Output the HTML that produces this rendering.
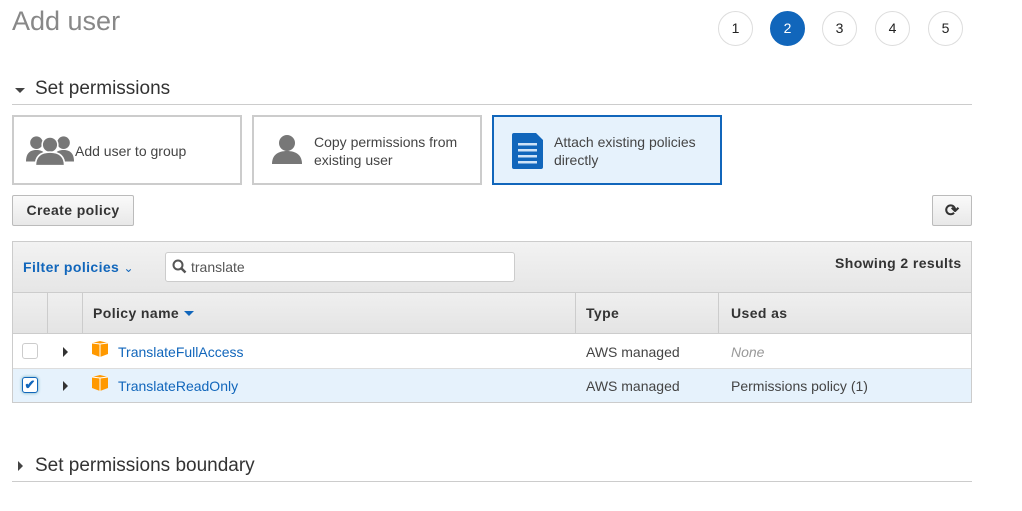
<!DOCTYPE html>
<html><head><style>
*{box-sizing:border-box;margin:0;padding:0}
body{width:1022px;height:511px;background:#fff;font-family:"Liberation Sans",Arial,sans-serif;color:#444;position:relative;overflow:hidden}
.a{position:absolute}
.circ{position:absolute;top:11px;width:35px;height:35px;border-radius:50%;border:1px solid #ddd;text-align:center;line-height:33px;font-size:14px;color:#222}
.card{position:absolute;top:115px;height:70px;border:2px solid #ccc;background:#fff;font-size:14px;color:#444}
.btn{position:absolute;border:1px solid #bbb;border-radius:2px;background:linear-gradient(#fafafa,#e8e8e8)}
.lnk{color:#1166bb}
b,.bd{letter-spacing:0.4px}
</style></head><body>
<div class="a" style="left:12px;top:6px;font-size:27px;color:#888">Add user</div>
<div class="circ" style="left:718px">1</div>
<div class="circ" style="left:770px;background:#1166bb;border-color:#1166bb;color:#fff">2</div>
<div class="circ" style="left:822px">3</div>
<div class="circ" style="left:875px">4</div>
<div class="circ" style="left:928px">5</div>

<div class="a" style="left:15px;top:88px;width:0;height:0;border-left:5px solid transparent;border-right:5px solid transparent;border-top:5px solid #444"></div>
<div class="a" style="left:35px;top:78px;font-size:19px;color:#333">Set permissions</div>
<div class="a" style="left:12px;top:104px;width:960px;height:1px;background:#ccc"></div>

<div class="card" style="left:12px;width:230px">
<svg class="a" style="left:12px;top:17px" width="48" height="32" viewBox="0 0 46 30"><g fill="#777"><circle cx="10" cy="8" r="6"/><path d="M0 26c0-8 4-11 10-11s10 3 10 11z"/><circle cx="36" cy="8" r="6"/><path d="M26 26c0-8 4-11 10-11s10 3 10 11z"/><circle cx="23" cy="10" r="7.5" stroke="#fff" stroke-width="1.5"/><path d="M9 30c0-10 6-13 14-13s14 3 14 13z" stroke="#fff" stroke-width="1.5"/></g></svg>
<div class="a" style="left:61px;top:26px">Add user to group</div></div>
<div class="card" style="left:252px;width:230px">
<svg class="a" style="left:17px;top:17px" width="32" height="30" viewBox="0 0 32 30"><g fill="#777"><circle cx="16" cy="9" r="8"/><path d="M1 30c0-9 6-13 15-13s15 4 15 13z"/></g></svg>
<div class="a" style="left:60px;top:16px;line-height:18px">Copy permissions from<br>existing user</div></div>
<div class="card" style="left:492px;width:230px;border-color:#1166bb;background:#e6f2fc">
<svg class="a" style="left:18px;top:16px" width="32" height="36" viewBox="0 0 32 36"><path d="M2 0h22l7 7v27a2 2 0 0 1-2 2H2a2 2 0 0 1-2-2V2a2 2 0 0 1 2-2z" fill="#1166bb"/><g fill="#cfe3f7"><rect x="6" y="10" width="19" height="2.5"/><rect x="6" y="16" width="19" height="2.5"/><rect x="6" y="22" width="19" height="2.5"/><rect x="6" y="28" width="19" height="2.5"/></g></svg>
<div class="a" style="left:60px;top:16px;line-height:18px">Attach existing policies<br>directly</div></div>

<div class="btn bd" style="left:12px;top:195px;width:122px;height:31px;font-size:14px;font-weight:bold;color:#333;text-align:center;line-height:29px">Create policy</div>
<div class="btn" style="left:932px;top:195px;width:40px;height:31px;text-align:center;line-height:29px;font-size:17px;font-weight:bold;color:#333">⟳</div>

<div class="a" style="left:12px;top:241px;width:960px;height:162px;border:1px solid #ccc"></div>
<div class="a" style="left:13px;top:242px;width:958px;height:50px;background:linear-gradient(#f2f2f2,#e6e6e6)"></div>
<div class="a lnk bd" style="left:23px;top:259px;font-size:14px;font-weight:bold">Filter policies <span style="font-weight:normal;font-size:12px">⌄</span></div>
<div class="a" style="left:165px;top:252px;width:350px;height:30px;background:#fff;border:1px solid #ccc;border-radius:3px"></div>
<svg class="a" style="left:172px;top:259px" width="15" height="15" viewBox="0 0 15 15"><circle cx="6" cy="6" r="4.5" fill="none" stroke="#555" stroke-width="2"/><path d="M9.5 9.5l4 4" stroke="#555" stroke-width="2.5"/></svg>
<div class="a" style="left:191px;top:259px;font-size:14px;color:#555">translate</div>
<div class="a bd" style="left:835px;top:255px;font-size:14px;font-weight:bold;color:#333">Showing 2 results</div>

<div class="a" style="left:13px;top:292px;width:958px;height:42px;background:linear-gradient(#efefef,#e4e4e4);border-top:1px solid #ccc;border-bottom:1px solid #ccc"></div>
<div class="a" style="left:47px;top:292px;width:1px;height:42px;background:#ccc"></div>
<div class="a" style="left:82px;top:292px;width:1px;height:42px;background:#ccc"></div>
<div class="a" style="left:575px;top:292px;width:1px;height:42px;background:#ccc"></div>
<div class="a" style="left:718px;top:292px;width:1px;height:42px;background:#ccc"></div>
<div class="a bd" style="left:93px;top:305px;font-size:14px;font-weight:bold;color:#333">Policy name</div>
<div class="a" style="left:184px;top:311px;width:0;height:0;border-left:5px solid transparent;border-right:5px solid transparent;border-top:5px solid #1166bb"></div>
<div class="a bd" style="left:586px;top:305px;font-size:14px;font-weight:bold;color:#333">Type</div>
<div class="a bd" style="left:731px;top:305px;font-size:14px;font-weight:bold;color:#333">Used as</div>

<div class="a" style="left:13px;top:368px;width:958px;height:1px;background:#ddd"></div>
<div class="a" style="left:13px;top:369px;width:958px;height:33px;background:#e6f2fc"></div>
<div class="a" style="left:22px;top:343px;width:16px;height:16px;border:1px solid #ccc;border-radius:3px;background:#fff"></div>
<div class="a" style="left:22px;top:377px;width:16px;height:16px;border:1px solid #1166bb;border-radius:3px;background:#fff;box-shadow:0 0 3px #6ab;color:#1166bb;font-size:13px;line-height:14px;text-align:center;font-weight:bold">✔</div>
<div class="a" style="left:63px;top:347px;border-top:5px solid transparent;border-bottom:5px solid transparent;border-left:5px solid #333"></div>
<div class="a" style="left:63px;top:381px;border-top:5px solid transparent;border-bottom:5px solid transparent;border-left:5px solid #333"></div>
<svg class="a" style="left:92px;top:341px" width="16" height="16" viewBox="0 0 16 16"><path d="M0 2l8-2 8 2v11l-8 3-8-3z" fill="#f90"/><path d="M8 3v13" stroke="#fff" stroke-width="1"/><path d="M0 2l8 1 8-1" stroke="#fff" stroke-width="1" fill="none"/></svg>
<svg class="a" style="left:92px;top:375px" width="16" height="16" viewBox="0 0 16 16"><path d="M0 2l8-2 8 2v11l-8 3-8-3z" fill="#f90"/><path d="M8 3v13" stroke="#fff" stroke-width="1"/><path d="M0 2l8 1 8-1" stroke="#fff" stroke-width="1" fill="none"/></svg>
<div class="a lnk" style="left:118px;top:344px;font-size:14px">TranslateFullAccess</div>
<div class="a lnk" style="left:118px;top:378px;font-size:14px">TranslateReadOnly</div>
<div class="a" style="left:586px;top:344px;font-size:14px;color:#444">AWS managed</div>
<div class="a" style="left:586px;top:378px;font-size:14px;color:#444">AWS managed</div>
<div class="a" style="left:731px;top:344px;font-size:14px;color:#999;font-style:italic">None</div>
<div class="a" style="left:731px;top:378px;font-size:14px;color:#444">Permissions policy (1)</div>

<div class="a" style="left:18px;top:461px;border-top:5px solid transparent;border-bottom:5px solid transparent;border-left:5px solid #444"></div>
<div class="a" style="left:35px;top:455px;font-size:19px;color:#333">Set permissions boundary</div>
<div class="a" style="left:12px;top:481px;width:960px;height:1px;background:#ccc"></div>
</body></html>
